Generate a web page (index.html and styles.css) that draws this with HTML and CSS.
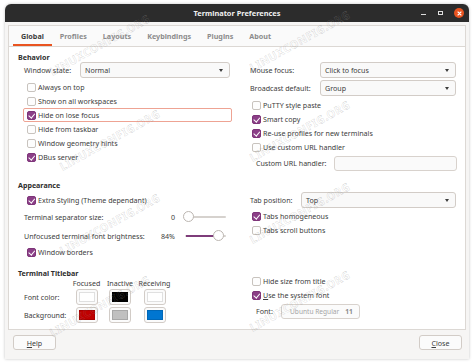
FILE: index.html
```html
<!DOCTYPE html>
<html>
<head>
<meta charset="utf-8">
<link rel="stylesheet" href="styles.css">
</head>
<body>
<div class="window">
  <div class="titlebar">
    <span></span>
    <span class="title">Terminator Preferences</span>
    <div class="wm">
      <span class="wm-min"></span>
      <span class="wm-max"></span>
      <span class="wm-close"><svg width="9" height="9" viewBox="0 0 9 9"><path d="M3 3L6 6M6 3L3 6" stroke="#fff" stroke-width="1.1" stroke-linecap="round"/></svg></span>
    </div>
  </div>
  <div class="body">
    <div class="notebook">
      <div class="tabs">
        <span class="tab active">Global</span>
        <span class="tab">Profiles</span>
        <span class="tab">Layouts</span>
        <span class="tab">Keybindings</span>
        <span class="tab">Plugins</span>
        <span class="tab">About</span>
      </div>
      <div class="page">
        <div class="col left">
          <div class="heading">Behavior</div>
          <div class="row combo-row">
            <span class="lbl">Window state:</span>
            <div class="combo c-wstate">Normal<span class="arrow"></span></div>
          </div>
          <div class="checks first">
            <div class="check"><span class="box"></span>Always on top</div>
            <div class="check"><span class="box"></span>Show on all workspaces</div>
            <div class="check focused"><span class="box on"></span>Hide on lose focus</div>
            <div class="check"><span class="box"></span>Hide from taskbar</div>
            <div class="check"><span class="box"></span>Window geometry hints</div>
            <div class="check"><span class="box on"></span>DBus server</div>
          </div>

          <div class="heading h-appearance">Appearance</div>
          <div class="check c-extra"><span class="box on"></span>Extra Styling (Theme dependant)</div>
          <div class="row slider-row">
            <span class="lbl">Terminal separator size:</span>
            <span class="val">0</span>
            <div class="slider"><span class="knob k0"></span></div>
          </div>
          <div class="row slider-row">
            <span class="lbl">Unfocused terminal font brightness:</span>
            <span class="val">84%</span>
            <div class="slider"><span class="fill"></span><span class="knob k84"></span></div>
          </div>
          <div class="check"><span class="box on"></span>Window borders</div>

          <div class="heading h-titlebar">Terminal Titlebar</div>
          <div class="swgrid">
            <span></span>
            <span class="colhead">Focused</span>
            <span class="colhead">Inactive</span>
            <span class="colhead">Receiving</span>
            <span class="lbl">Font color:</span>
            <span class="sw"><span class="swc" style="background:#ffffff"></span></span>
            <span class="sw"><span class="swc" style="background:#000000"></span></span>
            <span class="sw"><span class="swc" style="background:#ffffff"></span></span>
            <span class="lbl">Background:</span>
            <span class="sw"><span class="swc" style="background:#c00000"></span></span>
            <span class="sw"><span class="swc" style="background:#c0c0c0"></span></span>
            <span class="sw"><span class="swc" style="background:#0076d1"></span></span>
          </div>
        </div>

        <div class="col right">
          <div class="row combo-row r-first">
            <span class="lbl w70">Mouse focus:</span>
            <div class="combo c-right">Click to focus<span class="arrow"></span></div>
          </div>
          <div class="row combo-row r-second">
            <span class="lbl w70">Broadcast default:</span>
            <div class="combo c-right">Group<span class="arrow"></span></div>
          </div>
          <div class="checks r-checks">
            <div class="check"><span class="box"></span>PuTTY style paste</div>
            <div class="check"><span class="box on"></span>Smart copy</div>
            <div class="check"><span class="box on"></span>Re-use profiles for new terminals</div>
            <div class="check"><span class="box"></span>Use custom URL handler</div>
          </div>
          <div class="row entry-row">
            <span class="lbl">Custom URL handler:</span>
            <div class="entry"></div>
          </div>
          <div class="row combo-row r-tabpos">
            <span class="lbl">Tab position:</span>
            <div class="combo c-tabpos">Top<span class="arrow"></span></div>
          </div>
          <div class="check r-homog"><span class="box on"></span>Tabs homogeneous</div>
          <div class="check"><span class="box"></span>Tabs scroll buttons</div>

          <div class="check r-hidesize"><span class="box"></span>Hide size from title</div>
          <div class="check"><span class="box on"></span><u>U</u>se the system font</div>
          <div class="row font-row">
            <span class="lbl">Font:</span>
            <div class="fontbtn"><span class="fname">Ubuntu Regular</span><span class="fsize">11</span></div>
          </div>
        </div>
      </div>
    </div>
    <div class="buttons">
      <span class="btn"><u>H</u>elp</span>
      <span class="btn"><u>C</u>lose</span>
    </div>
  </div>
  <span class="wmark w1">LINUXCONFIG.ORG</span>
  <span class="wmark w2">LINUXCONFIG.ORG</span>
  <span class="wmark w3">LINUXCONFIG.ORG</span>
  <span class="wmark w4">LINUXCONFIG.ORG</span>
  <span class="wmark w5">LINUXCONFIG.ORG</span>
  <span class="wmark w6">LINUXCONFIG.ORG</span>
  <span class="wmark w7">LINUXCONFIG.ORG</span>
  <span class="wmark w8">LINUXCONFIG.ORG</span>
</div>
</body>
</html>
```

FILE: styles.css
```css
* { box-sizing: border-box; }
html, body { margin: 0; padding: 0; }
body {
  width: 474px;
  height: 364px;
  background: #ffffff;
  font-family: "Noto Sans", "DejaVu Sans", sans-serif;
  font-size: 7.1px;
  color: #3c3c3c;
  overflow: hidden;
}
.window {
  position: relative;
  margin: 4px 0 0 5px;
  width: 464px;
  height: 355px;
  border-radius: 6px 6px 0 0;
  box-shadow: 0 0 3px rgba(0,0,0,0.25);
  background: #f6f5f4;
  overflow: hidden;
}
.titlebar {
  height: 18px;
  background: #2c2c2c;
  color: #f0f0f0;
  display: grid;
  grid-template-columns: 1fr auto 1fr;
  align-items: center;
}
.title { font-weight: bold; font-size: 7.4px; }
.wm { display: flex; justify-content: flex-end; align-items: center; padding-right: 5px; }
.wm-min { width: 5px; height: 1px; background: #ddd; margin-top: 3px; margin-right: 12px; }
.wm-max { width: 5px; height: 4px; border: 1px solid #ddd; margin-right: 11px; }
.wm-close {
  width: 10px; height: 10px; border-radius: 50%;
  background: #e95420; display: flex; align-items: center; justify-content: center;
}
.body { padding: 3px 3px 0 3px; }
.notebook {
  border: 1px solid #dcd8d4;
  background: #ffffff;
}
.tabs {
  display: flex;
  height: 21px;
  padding-left: 4px;
  border-bottom: 1px solid #dcd8d4;
  background: #fafafa;
}
.tab {
  padding: 0 8px;
  display: flex;
  align-items: center;
  color: #8c8c8c;
  font-weight: bold;
  font-size: 7.2px;
  border-bottom: 2px solid transparent;
  padding-top: 1px;
}
.tab.active { color: #3c3c3c; border-bottom-color: #e95420; }
.page {
  display: grid;
  grid-template-columns: 232px 1fr;
  height: 282px;
}
.col { display: flex; flex-direction: column; }
.left { padding-left: 9px; padding-top: 5px; }
.right { padding-left: 9px; padding-top: 15px; }
.heading { font-weight: bold; color: #2e2e2e; height: 10px; line-height: 10px; }
.row { display: flex; align-items: center; }
.lbl { white-space: nowrap; }
.combo-row { height: 16px; margin-top: 0; padding-left: 6px; }
.combo-row .lbl { width: 56px; }
.combo {
  position: relative;
  height: 16px;
  border: 1px solid #d2ccc7;
  border-radius: 3px;
  background: #f9f9f9;
  display: flex;
  align-items: center;
  padding-left: 4px;
  color: #3c3c3c;
}
.arrow {
  position: absolute;
  right: 6px; top: 6px;
  width: 0; height: 0;
  border-left: 2.5px solid transparent;
  border-right: 2.5px solid transparent;
  border-top: 3px solid #3c3c3c;
}
.c-wstate { width: 150px; }
.checks { display: flex; flex-direction: column; }
.checks.first { margin-top: 2px; }
.check {
  height: 14px;
  display: flex;
  align-items: center;
  padding-left: 9px;
  white-space: nowrap;
}
.right .check { padding-left: 2px; }
.box {
  width: 9px; height: 9px;
  border: 1px solid #c8c3be;
  border-radius: 2px;
  background: #fdfdfd;
  margin-right: 2px;
  flex: none;
  position: relative;
}
.box.on { background: #8b3f87; border-color: #7e3479; }
.box.on::after {
  content: "";
  position: absolute;
  left: 2px; top: 0.5px;
  width: 2.5px; height: 4.5px;
  border: solid #fff;
  border-width: 0 1.3px 1.3px 0;
  transform: rotate(40deg);
}
.check.focused {
  margin-left: 5px;
  margin-right: 9px;
  padding-left: 3px;
  border: 1px solid #eea393;
  border-radius: 2px;
}
.h-appearance { margin-top: 16px; }
.c-extra { margin-top: 3px; }
.slider-row { height: 19px; padding-left: 6px; }
.slider-row .lbl { flex: 1; }
.val { width: 20px; text-align: right; margin-right: 8px; }
.slider { position: relative; width: 43px; height: 12px; margin-right: 15px; }
.slider::before {
  content: ""; position: absolute; left: 2px; right: 0; top: 5px; height: 2px;
  background: #d6d2ce; border-radius: 1px;
}
.fill { position: absolute; left: 3px; width: 29px; top: 5px; height: 2px; background: #7e3c7a; z-index: 1; }
.knob {
  position: absolute; top: 0; width: 11px; height: 11px; border-radius: 50%;
  background: #fff; border: 1px solid #bcb6b1; z-index: 2;
}
.k0 { left: 0; }
.k84 { left: 30px; }
.h-titlebar { margin-top: 9px; }
.swgrid {
  display: grid;
  grid-template-columns: 46px 33px 34px 35px;
  grid-template-rows: 10px 18px 18px;
  align-items: center;
  justify-items: center;
  padding-left: 6px;
}
.swgrid .lbl { justify-self: start; }
.colhead { color: #3c3c3c; }
.sw {
  width: 22px; height: 16px;
  border: 1px solid #d2ccc7; border-radius: 3px; background: #fbfbfb;
  display: flex; align-items: center; justify-content: center;
}
.swc { width: 16px; height: 10px; border: 1px solid rgba(0,0,0,0.12); }
.w70 { width: 70px !important; }
.combo-row.r-first, .combo-row.r-second, .combo-row.r-tabpos { padding-left: 0; }
.r-second { margin-top: 2px; }
.c-right { width: 136px; }
.r-checks { margin-top: 2px; }
.entry-row { height: 16px; margin-top: 1px; padding-left: 6px; }
.entry-row .lbl { width: 78px; }
.entry { width: 123px; height: 15px; border: 1px solid #d8d2cd; border-radius: 3px; background: #fafafa; }
.r-tabpos { margin-top: 21px; }
.r-tabpos .lbl { width: 51px !important; }
.c-tabpos { width: 155px; }
.r-homog { margin-top: 1px; }
.r-hidesize { margin-top: 37px; }
.font-row { height: 16px; margin-top: 1px; padding-left: 6px; }
.font-row .lbl { width: 25px; }
.fontbtn {
  width: 79px; height: 15px; border: 1px solid #d8d2cd; border-radius: 3px; background: #fbfbfb;
  display: flex; align-items: center; gap: 6px; padding: 0 0 0 8px;
  white-space: nowrap;
}
.fname { color: #a5a5a5; font-size: 6.6px; }
.fsize { color: #8a8a8a; font-weight: bold; font-size: 6.6px; }
.buttons {
  display: flex; justify-content: space-between;
  padding: 5px 4px 0 5px;
}
.btn {
  width: 43px; height: 15px;
  border: 1px solid #d2ccc7; border-radius: 3px; background: #fbfbfb;
  display: flex; align-items: center; justify-content: center; color: #3c3c3c;
}
u { text-decoration-thickness: 0.5px; text-underline-offset: 1px; }
.wmark {
  position: absolute;
  width: 116px;
  height: 14px;
  line-height: 14px;
  text-align: center;
  font-size: 11px;
  font-weight: bold;
  color: transparent;
  -webkit-text-stroke: 0.35px rgba(140,140,140,0.45);
  transform: rotate(-29deg);
  letter-spacing: 0.6px;
  white-space: nowrap;
  pointer-events: none;
}
.w1 { left: 37px; top: 34px; }
.w2 { left: 237px; top: 30px; }
.w3 { left: 47px; top: 129px; }
.w4 { left: 237px; top: 120px; }
.w5 { left: 47px; top: 213px; }
.w6 { left: 237px; top: 202px; }
.w7 { left: 37px; top: 295px; }
.w8 { left: 237px; top: 290px; }
```
